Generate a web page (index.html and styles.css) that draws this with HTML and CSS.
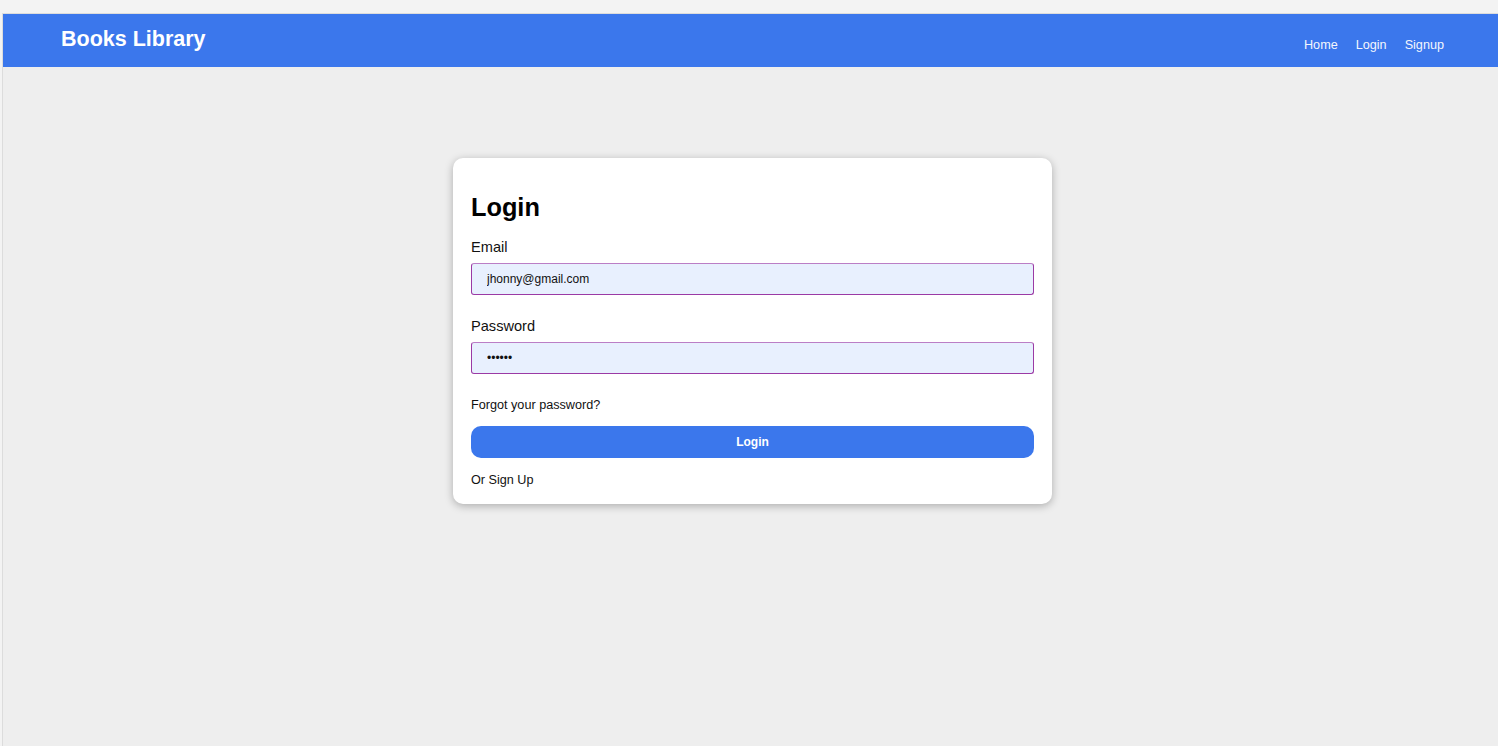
FILE: index.html
```html
<!DOCTYPE html>
<html lang="en">
<head>
<meta charset="utf-8">
<title>Books Library</title>
<link rel="stylesheet" href="styles.css">
</head>
<body>
<div class="frame">
  <header class="navbar">
    <div class="brand">Books Library</div>
    <nav class="nav-links">
      <a href="#">Home</a>
      <a href="#">Login</a>
      <a href="#">Signup</a>
    </nav>
  </header>
  <main class="main">
    <form class="card">
      <h2 class="card-title">Login</h2>
      <div class="form-group">
        <label class="field-label" for="email">Email</label>
        <input class="field-input" id="email" type="email" value="jhonny@gmail.com">
      </div>
      <div class="form-group">
        <label class="field-label" for="password">Password</label>
        <input class="field-input" id="password" type="password" value="123456">
      </div>
      <p class="forgot">Forgot your password?</p>
      <button class="btn-login" type="button">Login</button>
      <p class="signup">Or Sign Up</p>
    </form>
  </main>
</div>
</body>
</html>
```

FILE: styles.css
```css
html, body {
  margin: 0;
  padding: 0;
  height: 100%;
}

body {
  background: #f3f3f3;
  font-family: "Liberation Sans", Arial, sans-serif;
  color: #000;
  overflow: hidden;
}

.frame {
  margin-top: 13px;
  margin-left: 2px;
  height: 733px;
  box-sizing: border-box;
  border-top: 1px solid #dcdcdc;
  border-left: 1px solid #dcdcdc;
  background: #eeeeee;
}

.navbar {
  height: 53px;
  background: #3b77ec;
  display: flex;
  justify-content: space-between;
  align-items: flex-start;
  padding: 0 54px 0 58px;
}

.brand {
  margin-top: 12px;
  font-size: 21.5px;
  font-weight: bold;
  color: #fff;
  line-height: 26px;
}

.nav-links {
  margin-top: 24px;
  display: flex;
  gap: 18px;
}

.nav-links a {
  color: #f4f6fd;
  text-decoration: none;
  font-size: 12.65px;
  line-height: 15px;
}

.main {
  display: flex;
  justify-content: center;
  padding: 91px 0 0 4px;
}

.card {
  width: 599px;
  box-sizing: border-box;
  background: #fff;
  border-radius: 10px;
  padding: 18px 18px 16px;
  box-shadow: 0 2px 8px rgba(0, 0, 0, 0.28);
}

.card-title {
  margin: 17px 0 17px;
  font-size: 25.3px;
  line-height: 29px;
  font-weight: bold;
}

.form-group {
  margin-bottom: 23px;
}

.field-label {
  display: block;
  font-size: 14.6px;
  line-height: 17px;
  margin-bottom: 7px;
  color: #111;
}

.field-input {
  display: block;
  width: 100%;
  height: 32px;
  box-sizing: border-box;
  margin: 0;
  padding: 0 15px;
  background: #e8f0fe;
  border: 1px solid #9b3aa5;
  border-top-color: #bb7ec6;
  border-radius: 3px;
  font-family: "Liberation Sans", Arial, sans-serif;
  font-size: 12px;
  color: #111;
  outline: none;
}

.forgot {
  margin: 24px 0 13px;
  font-size: 12.65px;
  line-height: 15px;
  color: #111;
}

.btn-login {
  display: block;
  width: 100%;
  height: 32px;
  border: none;
  border-radius: 10px;
  background: #3b77ec;
  color: #fff;
  font-family: "Liberation Sans", Arial, sans-serif;
  font-size: 12px;
  font-weight: bold;
  cursor: pointer;
}

.signup {
  margin: 15px 0 0;
  font-size: 12.65px;
  line-height: 15px;
  color: #111;
}
```
